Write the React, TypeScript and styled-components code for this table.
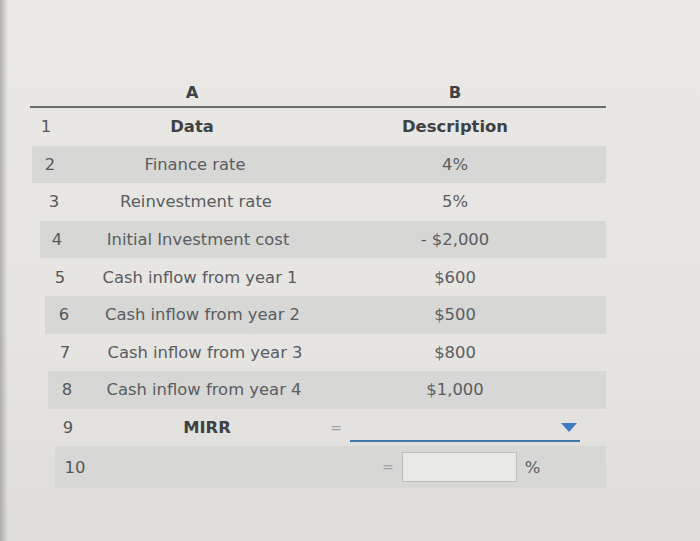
import * as React from "react";
import styled, { createGlobalStyle } from "styled-components";

interface IRow {
  num: number;
  label?: string;
  value?: string;
  bold?: boolean;
  shaded?: boolean;
  indent: number;
  numWidth: number;
  kind?: "dropdown" | "input";
}

const rows: IRow[] = [
  { num: 1, label: "Data", value: "Description", bold: true, indent: 0, numWidth: 32 },
  { num: 2, label: "Finance rate", value: "4%", shaded: true, indent: 2, numWidth: 36 },
  { num: 3, label: "Reinvestment rate", value: "5%", indent: 8, numWidth: 32 },
  { num: 4, label: "Initial Investment cost", value: "- $2,000", shaded: true, indent: 10, numWidth: 34 },
  { num: 5, label: "Cash inflow from year 1", value: "$600", indent: 12, numWidth: 36 },
  { num: 6, label: "Cash inflow from year 2", value: "$500", shaded: true, indent: 15, numWidth: 38 },
  { num: 7, label: "Cash inflow from year 3", value: "$800", indent: 12, numWidth: 46 },
  { num: 8, label: "Cash inflow from year 4", value: "$1,000", shaded: true, indent: 18, numWidth: 38 },
  { num: 9, label: "MIRR", bold: true, indent: 14, numWidth: 48, kind: "dropdown" },
  { num: 10, shaded: true, indent: 25, numWidth: 40, kind: "input" },
];

export default function App() {
  return (
    <>
      <GlobalStyle />
      <Sheet>
        <HeaderRow>
          <span />
          <ColumnLetter>A</ColumnLetter>
          <span />
          <ColumnLetter>B</ColumnLetter>
          <span />
        </HeaderRow>
        {rows.map((row) => (
          <Row
            key={row.num}
            $shaded={row.shaded}
            $indent={row.indent}
            $numWidth={row.numWidth}
            $tall={row.kind === "input"}
          >
            <RowNum>{row.num}</RowNum>
            <Cell $bold={row.bold}>{row.label}</Cell>
            {row.kind === "input" ? (
              <AnswerCell>
                <Equals>=</Equals>
                <AnswerBox />
                <Percent>%</Percent>
              </AnswerCell>
            ) : (
              <>
                <Equals>{row.kind === "dropdown" ? "=" : ""}</Equals>
                {row.kind === "dropdown" ? (
                  <DropdownCell>
                    <Dropdown>
                      <Caret viewBox="0 0 16 10">
                        <path d="M0 0 H16 L8 9 Z" fill="#3b7dbd" />
                      </Caret>
                    </Dropdown>
                  </DropdownCell>
                ) : (
                  <>
                    <Cell $bold={row.bold}>{row.value}</Cell>
                    <span />
                  </>
                )}
              </>
            )}
          </Row>
        ))}
      </Sheet>
    </>
  );
}

const GlobalStyle = createGlobalStyle`
  body {
    margin: 0;
    width: 700px;
    height: 541px;
    overflow: hidden;
    font-family: "DejaVu Sans", Verdana, sans-serif;
    background:
      linear-gradient(90deg, rgba(110, 110, 108, 0.45) 0px, rgba(120, 120, 118, 0) 8px),
      linear-gradient(180deg, #e9e8e5 0%, #e6e5e2 60%, #dedddb 100%);
  }
`;

const Sheet = styled.div`
  width: 576px;
  margin-left: 30px;
  padding-top: 78px;
  color: #5a5d61;
  font-size: 16.4px;
`;

const HeaderRow = styled.div`
  display: grid;
  grid-template-columns: 32px 260px 28px 210px 46px;
  height: 28px;
  align-items: center;
  border-bottom: 2px solid #6b6c6d;
`;

const ColumnLetter = styled.span`
  text-align: center;
  font-weight: 700;
  color: #3f4245;
`;

const Row = styled.div<{ $shaded?: boolean; $indent: number; $numWidth: number; $tall?: boolean }>`
  display: grid;
  grid-template-columns: ${(p) => `${p.$numWidth}px 1fr 28px 210px 46px`};
  align-items: center;
  margin-left: ${(p) => p.$indent}px;
  height: ${(p) => (p.$tall ? 42 : 37.6)}px;
  background: ${(p) => (p.$shaded ? "#d7d7d5" : "transparent")};
`;

const RowNum = styled.span`
  text-align: center;
  color: #55585b;
`;

const Cell = styled.span<{ $bold?: boolean }>`
  text-align: center;
  white-space: nowrap;
  font-weight: ${(p) => (p.$bold ? 700 : 400)};
  color: ${(p) => (p.$bold ? "#3f4245" : "#5a5d61")};
`;

const Equals = styled.span`
  text-align: center;
  color: #a3a4a5;
  font-size: 14px;
`;

const DropdownCell = styled.div`
  grid-column: 4 / 6;
  height: 100%;
  padding-right: 26px;
  display: flex;
  align-items: flex-end;
`;

const Dropdown = styled.div`
  flex: 1;
  height: 24px;
  margin-bottom: 4px;
  border-bottom: 2px solid #3f78a8;
  display: flex;
  justify-content: flex-end;
  align-items: center;
`;

const Caret = styled.svg`
  width: 16px;
  height: 10px;
  margin-right: 3px;
`;

const AnswerCell = styled.div`
  grid-column: 3 / 6;
  display: flex;
  align-items: center;
  padding-left: 60px;
  gap: 8px;
`;

const AnswerBox = styled.div`
  width: 113px;
  height: 28px;
  background: #e9e9e7;
  border: 1px solid #bcbcba;
`;

const Percent = styled.span`
  color: #5a5d61;
`;
